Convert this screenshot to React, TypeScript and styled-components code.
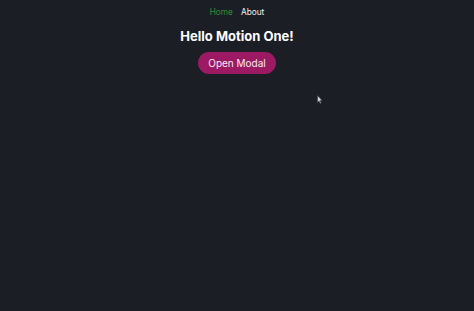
import styled, { createGlobalStyle } from 'styled-components';

const GlobalStyle = createGlobalStyle`
  html, body {
    margin: 0;
    padding: 0;
    background: #1b1e25;
  }
  body {
    font-family: Inter, 'Liberation Sans', sans-serif;
    color: #f2f2f2;
  }
`;

const Page = styled.div`
  position: relative;
  height: 311px;
  display: flex;
  flex-direction: column;
  align-items: center;
  padding-top: 6px;
  box-sizing: border-box;
`;

const Nav = styled.nav`
  display: flex;
  gap: 8px;
  font-size: 8.3px;
  line-height: 12px;
`;

const NavLink = styled.a<{ $active?: boolean }>`
  color: ${(p) => (p.$active ? '#2d8f37' : '#f0f0f0')};
  text-decoration: none;
`;

const Title = styled.h1`
  margin: 10px 0 0;
  font-size: 13px;
  line-height: 16px;
  font-weight: 700;
  color: #ffffff;
`;

const ModalButton = styled.button`
  margin-top: 8px;
  height: 22px;
  padding: 0 10px;
  border: none;
  border-radius: 11px;
  background: #9c1a63;
  color: #fbe8f2;
  font-family: inherit;
  font-size: 10px;
`;

const Cursor = styled.svg`
  position: absolute;
  left: 317px;
  top: 95px;
`;

export default function App() {
  return (
    <>
      <GlobalStyle />
      <Page>
        <Nav>
          <NavLink $active href="#">Home</NavLink>
          <NavLink href="#">About</NavLink>
        </Nav>
        <Title>Hello Motion One!</Title>
        <ModalButton>Open Modal</ModalButton>
        <Cursor width="6" height="9" viewBox="0 0 6 9">
          <path d="M0.5 0.5 L0.5 7.5 L2 6 L3.2 8.5 L4.2 8 L3 5.6 L5.2 5.6 Z" fill="#cfd2d8" stroke="#3a3d44" strokeWidth="0.6" />
        </Cursor>
      </Page>
    </>
  );
}
